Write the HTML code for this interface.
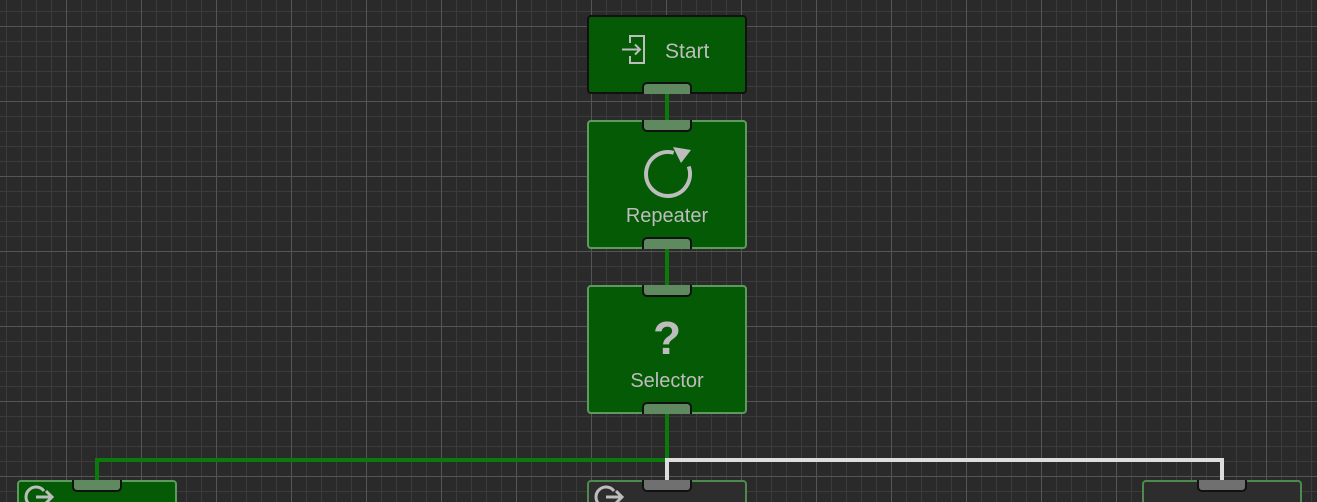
<!DOCTYPE html>
<html><head><style>
html,body{margin:0;padding:0;width:1317px;height:502px;overflow:hidden;}
body{position:relative;font-family:"Liberation Sans",sans-serif;
background-color:#2a2a2a;
background-image:
linear-gradient(to right,#555 1px,transparent 1px),
linear-gradient(to bottom,#555 1px,transparent 1px),
linear-gradient(to right,#3b3b3b 1px,transparent 1px),
linear-gradient(to bottom,#3b3b3b 1px,transparent 1px);
background-size:75px 75px,75px 75px,15px 15px,15px 15px;
background-position:66px 26px,66px 26px,6px 11px,6px 11px;}
.n{position:absolute;width:160px;border:2px solid #5e9a5e;border-radius:4px;background:#055a05;box-sizing:border-box;color:#bdbdbd;text-align:center;}
.d{background:#2d2d2d;border-color:#4e8a4e;}
.p{position:absolute;left:53px;width:50px;height:12px;background:#5f8a5f;border:2px solid #111;box-sizing:border-box;}
.pt{top:-2px;border-top:none;border-radius:0 0 5px 5px;}
.pb{bottom:-2px;border-bottom:none;border-radius:5px 5px 0 0;}
.gp{background:#707070;}
.l{position:absolute;}
</style></head><body>
<div class="l" style="left:665px;top:92px;width:4px;height:30px;background:#0a7a0a"></div>
<div class="l" style="left:665px;top:247px;width:4px;height:40px;background:#0a7a0a"></div>
<div class="l" style="left:665px;top:412px;width:4px;height:50px;background:#0a7a0a"></div>
<div class="l" style="left:95px;top:458px;width:573px;height:4px;background:#0a7a0a"></div>
<div class="l" style="left:95px;top:458px;width:4px;height:24px;background:#0a7a0a"></div>
<div class="l" style="left:665px;top:458px;width:559px;height:4px;background:#ddd"></div>
<div class="l" style="left:665px;top:460px;width:4px;height:22px;background:#ddd"></div>
<div class="l" style="left:1220px;top:458px;width:4px;height:24px;background:#ddd"></div>

<div class="n" style="left:587px;top:15px;height:79px;border-color:#111;">
<svg style="position:absolute;left:32px;top:18px" width="34" height="32" viewBox="0 0 34 32" fill="none" stroke="#bdbdbd" stroke-width="2"><path d="M9 8V1H23V28H9V21M1 14.5H19M14 9.5L19 14.5L14 19.5"/></svg>
<div style="position:absolute;left:76px;top:23px;font-size:21px">Start</div>
<div class="p pb"></div></div>

<div class="n" style="left:587px;top:120px;height:129px">
<div class="p pt"></div>
<svg style="position:absolute;left:51px;top:24px" width="56" height="56" viewBox="0 0 56 56" fill="none" stroke="#bdbdbd" stroke-width="4"><path d="M48.7 20.5A22 22 0 1 1 33.7 6.75"/><path d="M33 1L51 4L41 17Z" fill="#bdbdbd" stroke="none"/></svg>
<div style="position:absolute;left:0;right:0;top:83px;font-size:20px">Repeater</div>
<div class="p pb"></div></div>

<div class="n" style="left:587px;top:285px;height:129px">
<div class="p pt"></div>
<div style="position:absolute;left:0;right:0;top:24px;font-size:46px;font-weight:bold">?</div>
<div style="position:absolute;left:0;right:0;top:83px;font-size:20px">Selector</div>
<div class="p pb"></div></div>

<div class="n" style="left:17px;top:480px;height:40px">
<div class="p pt"></div>
<svg style="position:absolute;left:5px;top:3px" width="32" height="24" viewBox="0 0 32 24" fill="none" stroke="#bdbdbd" stroke-width="3"><path d="M20 6A10 10 0 1 0 20 18M12 12H28M22 6L28 12L22 18"/></svg></div>
<div class="n d" style="left:587px;top:480px;height:40px">
<div class="p pt gp"></div>
<svg style="position:absolute;left:5px;top:3px" width="32" height="24" viewBox="0 0 32 24" fill="none" stroke="#bdbdbd" stroke-width="3"><path d="M20 6A10 10 0 1 0 20 18M12 12H28M22 6L28 12L22 18"/></svg></div>
<div class="n d" style="left:1142px;top:480px;height:40px">
<div class="p pt gp"></div></div>
</body></html>
